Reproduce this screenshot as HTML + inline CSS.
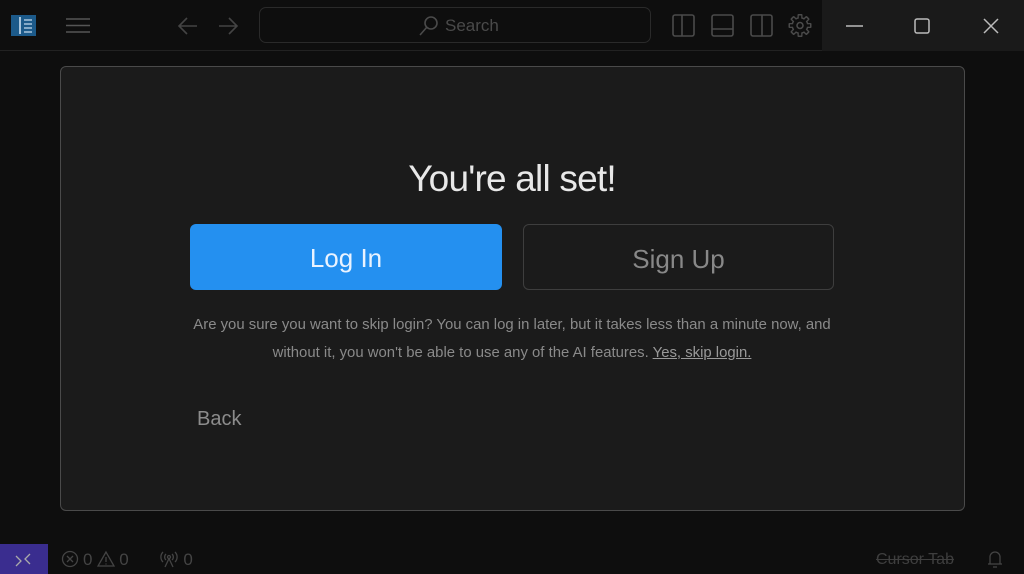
<!DOCTYPE html>
<html><head><meta charset="utf-8"><style>
*{margin:0;padding:0;box-sizing:border-box}
body{width:1024px;height:574px;background:#0e0e0e;font-family:"Liberation Sans",sans-serif;position:relative;overflow:hidden;color:#ccc}
.top{position:absolute;left:0;top:0;width:1024px;height:51px;border-bottom:1px solid #222;background:#0e0e0e}
.winc{position:absolute;left:822px;top:0;width:202px;height:51px;background:#1a1a1a}
.search{position:absolute;left:259px;top:7px;width:392px;height:36px;border:1px solid #2a2a2a;border-radius:7px}
.search span{position:absolute;left:185px;top:8px;font-size:17px;color:#4a4a4a}
.modal{position:absolute;left:60px;top:66px;width:905px;height:445px;background:#1b1b1b;border:1px solid #4a4a4a;border-radius:6px}
h1{position:absolute;left:0;width:100%;top:158px;text-align:center;font-weight:normal;font-size:37px;color:#e8e8e8;letter-spacing:-0.8px}
.btn{position:absolute;top:224px;height:66px;border-radius:6px;font-size:26px;text-align:center;line-height:68px}
.b1{left:190px;width:312px;background:#2490f0;color:#eaf3ff}
.b2{left:523px;width:311px;border:1px solid #3e3e3e;color:#888}
.p{position:absolute;left:130px;width:764px;top:311px;text-align:center;font-size:14.9px;line-height:28px;color:#8a8a8a;letter-spacing:0}
.p u{color:#999}
.back{position:absolute;left:197px;top:408px;font-size:20px;color:#8c8c8c}
.status{position:absolute;left:0;top:544px;width:1024px;height:30px}
</style></head><body>
<div class="top">
<svg style="position:absolute;left:11px;top:15px" width="25" height="21"><rect width="25" height="21" fill="#1c5a8a"/><rect x="8" y="2" width="2" height="17" fill="#a8c4dc"/><g stroke="#a8c4dc" stroke-width="1.5"><path d="M13 5h8M13 9h8M13 13h8M13 17h8"/></g></svg>
<svg style="position:absolute;left:65px;top:17px" width="26" height="17" stroke="#555" stroke-width="1.6"><path d="M1 2h24M1 8.5h24M1 15h24"/></svg>
<svg style="position:absolute;left:177px;top:15px" width="62" height="22" fill="none" stroke="#444" stroke-width="1.6"><path d="M20 11H2M10 3L2 11l8 8M42 11h18M52 3l8 8-8 8"/></svg>
<div class="search"><svg style="position:absolute;left:158px;top:7px" width="22" height="22" fill="none" stroke="#4a4a4a" stroke-width="1.6"><circle cx="13" cy="8" r="6"/><path d="M9 12L2 20"/></svg><span>Search</span></div>
<svg style="position:absolute;left:672px;top:14px" width="140" height="24" fill="none" stroke="#4a4a4a" stroke-width="1.6"><rect x="1" y="1" width="21" height="21" rx="2"/><path d="M10 1v21"/><rect x="40" y="1" width="21" height="21" rx="2"/><path d="M40 15h21"/><rect x="79" y="1" width="21" height="21" rx="2"/><path d="M90 1v21"/>
<g transform="translate(128 11.5)" fill="#4a4a4a" stroke="none">
<circle r="8.5"/>
<rect x="-2.5" y="-11.5" width="5" height="23" rx="1"/>
<rect x="-2.5" y="-11.5" width="5" height="23" rx="1" transform="rotate(45)"/>
<rect x="-2.5" y="-11.5" width="5" height="23" rx="1" transform="rotate(90)"/>
<rect x="-2.5" y="-11.5" width="5" height="23" rx="1" transform="rotate(135)"/>
<circle r="7" fill="#0e0e0e"/>
<rect x="-1.2" y="-10" width="2.4" height="20" fill="#0e0e0e"/>
<rect x="-1.2" y="-10" width="2.4" height="20" fill="#0e0e0e" transform="rotate(45)"/>
<rect x="-1.2" y="-10" width="2.4" height="20" fill="#0e0e0e" transform="rotate(90)"/>
<rect x="-1.2" y="-10" width="2.4" height="20" fill="#0e0e0e" transform="rotate(135)"/>
<circle r="3" fill="none" stroke="#4a4a4a" stroke-width="1.6"/>
</g></svg>
<div class="winc"><svg width="202" height="51" fill="none" stroke="#bbb" stroke-width="1.5"><path d="M24 26h17"/><rect x="93" y="19" width="14" height="14" rx="2"/><path d="M162 19l14 14M176 19l-14 14"/></svg></div>
</div>
<div class="modal"></div>
<h1>You're all set!</h1>
<div class="btn b1">Log In</div>
<div class="btn b2">Sign Up</div>
<div class="p">Are you sure you want to skip login? You can log in later, but it takes less than a minute now, and<br>without it, you won't be able to use any of the AI features. <u>Yes, skip login.</u></div>
<div class="back">Back</div>
<div class="status">
<div style="position:absolute;left:0;top:0;width:48px;height:30px;background:#3a2d8f"></div>
<svg style="position:absolute;left:14px;top:8px" width="18" height="16" fill="none" stroke="#aaa" stroke-width="1.3"><path d="M2 14l5-5-5-5M16 2l-5 5 5 5"/></svg>
<div style="position:absolute;left:61px;top:6px;font-size:17px;color:#444">
<svg width="22" height="18" style="vertical-align:-3px" fill="none" stroke="#444" stroke-width="1.3"><circle cx="9" cy="9" r="7.5"/><path d="M6 6l6 6M12 6l-6 6"/></svg>0 <svg width="22" height="18" style="vertical-align:-3px" fill="none" stroke="#444" stroke-width="1.3"><path d="M9 2L1 16h16z M9 7v5M9 13.5v1"/></svg>0
<span style="margin-left:26px"><svg width="24" height="18" style="vertical-align:-3px" fill="none" stroke="#444" stroke-width="1.3"><circle cx="10" cy="7" r="1.5"/><path d="M10 8.5L6 17M10 8.5l4 8.5M7 4a4 4 0 000 6M13 4a4 4 0 010 6M4 2a7 7 0 000 10M16 2a7 7 0 010 10"/></svg>0</span></div>
<div style="position:absolute;left:876px;top:7px;font-size:16px;color:#3e3e3e;text-decoration:line-through">Cursor Tab</div>
<svg style="position:absolute;left:986px;top:5px" width="18" height="20" fill="none" stroke="#444" stroke-width="1.3"><path d="M4 15V8a5 5 0 0110 0v7zM2 15h14M7 18h4"/></svg>
</div>
</body></html>
